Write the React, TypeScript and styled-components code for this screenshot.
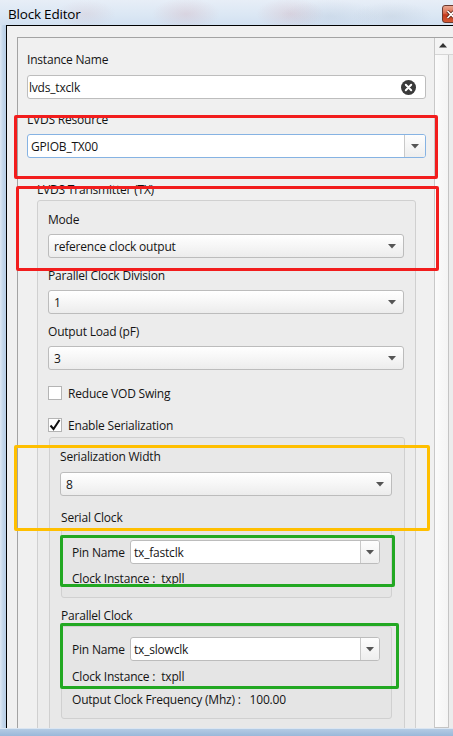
import React from 'react';
import styled, { createGlobalStyle } from 'styled-components';

const Global = createGlobalStyle`
  html, body { margin: 0; padding: 0; background: #c3d5e8; }
  * { box-sizing: border-box; }
`;

const Page = styled.div`
  position: relative;
  width: 453px;
  height: 736px;
  overflow: hidden;
  display: flex;
  flex-direction: column;
  background: linear-gradient(90deg, #dfe9f4 0px, #c3d6ea 3px, #b9cfe6 6px);
  font-family: "Open Sans", "Noto Sans", sans-serif;
  font-size: 12px;
  letter-spacing: -0.2px;
  color: #141414;
`;

const TitleBar = styled.div`
  height: 25px;
  flex: none;
  display: flex;
  align-items: flex-start;
  padding-left: 8px;
  background:
    radial-gradient(ellipse 30px 14px at 86px 14px, rgba(200, 140, 150, 0.14), transparent),
    radial-gradient(ellipse 34px 16px at 186px 14px, rgba(200, 110, 120, 0.16), transparent),
    radial-gradient(ellipse 34px 16px at 290px 14px, rgba(200, 110, 120, 0.16), transparent),
    radial-gradient(ellipse 50px 16px at 330px 16px, rgba(130, 150, 180, 0.14), transparent),
    radial-gradient(ellipse 40px 14px at 392px 16px, rgba(140, 150, 170, 0.14), transparent),
    linear-gradient(180deg, #e7eef7 0%, #dbe7f4 60%, #d2e1f1 100%);
`;

const TitleText = styled.div`
  flex: 1;
  margin-top: 5px;
  font-family: "Open Sans", "Noto Sans", sans-serif;
  font-size: 13.5px;
  line-height: 18px;
  color: #000;
  letter-spacing: -0.2px;
`;

const CloseButton = styled.div`
  flex: none;
  width: 20px;
  height: 18px;
  margin-top: 5px;
  margin-right: -9px;
  border: 1px solid #6b3a30;
  border-radius: 3px 0 0 3px;
  background: linear-gradient(180deg, #e9a790 0%, #d9694c 45%, #c4381c 55%, #d45a34 100%);
  display: flex;
  align-items: center;
  padding-left: 3px;
`;

const Window = styled.div`
  flex: 1;
  min-height: 0;
  margin-left: 6px;
  border-left: 1px solid #000;
  border-top: 1px solid #000;
  background: #f0f0f0;
  padding: 11px 0 0 10px;
  display: flex;
`;

const BottomStrip = styled.div`
  height: 8px;
  flex: none;
  border-top: 1px solid #dbe6f2;
  background: linear-gradient(180deg, #b4cbe4 0%, #9ab8d9 100%);
`;

const ScrollArea = styled.div`
  flex: 1;
  min-width: 0;
  display: flex;
  border-left: 1px solid #a3a3a3;
  border-top: 1px solid #a3a3a3;
`;

const Viewport = styled.div`
  flex: 1;
  min-width: 0;
  overflow: hidden;
  padding: 14px 8px 0 9px;
  display: flex;
  flex-direction: column;
`;

const Scrollbar = styled.div`
  width: 19px;
  flex: none;
  border-left: 1px solid #c8c8c8;
  background: #ececec;
  display: flex;
  flex-direction: column;
`;

const ScrollButton = styled.div`
  height: 17px;
  flex: none;
  display: flex;
  justify-content: center;
  padding-right: 3px;
  padding-top: 5px;
  background: #f4f4f4;
  border-bottom: 1px solid #d6d6d6;
`;

const ScrollThumb = styled.div`
  flex: 1;
  margin-right: 4px;
  background: linear-gradient(90deg, #fbfbfb, #f4f4f4);
  border-right: 1px solid #c4c4c4;
  border-bottom: 1px solid #c4c4c4;
`;

const Label = styled.div<{ $mt?: number }>`
  height: 16px;
  line-height: 16px;
  margin-top: ${p => p.$mt ?? 0}px;
  white-space: nowrap;
  flex: none;
`;

const TextField = styled.div<{ $mt?: number }>`
  height: 24px;
  flex: none;
  margin-top: ${p => p.$mt ?? 0}px;
  border: 1px solid #bdbdbd;
  border-radius: 3px;
  background: #fff;
  display: flex;
  align-items: center;
  padding: 0 9px 0 1px;
`;

const FieldText = styled.span`
  flex: 1;
  white-space: nowrap;
`;

const Combo = styled.div<{ $mt?: number; $focus?: boolean; $edit?: boolean }>`
  height: 24px;
  flex: ${p => (p.$edit ? 1 : 'none')};
  margin-top: ${p => p.$mt ?? 0}px;
  border: 1px solid ${p => (p.$focus ? '#86b3e3' : '#bcbcbc')};
  border-radius: 3px;
  background: ${p => (p.$focus || p.$edit ? '#fff' : 'linear-gradient(180deg, #ffffff 0%, #f6f6f6 50%, #ececec 100%)')};
  display: flex;
  align-items: stretch;
  overflow: hidden;
`;

const ComboText = styled.div<{ $pl: number }>`
  flex: 1;
  display: flex;
  align-items: center;
  padding-left: ${p => p.$pl}px;
  white-space: nowrap;
`;

const ComboButton = styled.div<{ $w: number; $sep?: boolean }>`
  width: ${p => p.$w}px;
  flex: none;
  display: flex;
  align-items: center;
  justify-content: center;
  border-left: ${p => (p.$sep ? '1px solid #c9c9c9' : 'none')};
  background: ${p => (p.$sep ? 'linear-gradient(180deg, #fdfdfd 0%, #eeeeee 100%)' : 'transparent')};
`;

const Group = styled.div<{ $mt: number; $ml: number; $mr: number }>`
  flex: none;
  display: flex;
  flex-direction: column;
  margin: ${p => p.$mt}px ${p => p.$mr}px 0 ${p => p.$ml}px;
`;

const GroupTitle = styled.div`
  height: 16px;
  line-height: 16px;
  margin-bottom: 2px;
  white-space: nowrap;
`;

const Frame = styled.div<{ $bg: string; $pad: string }>`
  border: 1px solid #d0d0d0;
  border-radius: 3px;
  background: ${p => p.$bg};
  padding: ${p => p.$pad};
  display: flex;
  flex-direction: column;
`;

const CheckRow = styled.div<{ $mt: number }>`
  height: 16px;
  flex: none;
  margin-top: ${p => p.$mt}px;
  display: flex;
  align-items: center;
  gap: 6px;
  white-space: nowrap;
`;

const CheckBox = styled.div`
  width: 14px;
  height: 14px;
  flex: none;
  border: 1px solid #b4b4b4;
  background: #fff;
  display: flex;
  align-items: center;
  justify-content: center;
`;

const PinRow = styled.div`
  height: 24px;
  flex: none;
  display: flex;
  align-items: center;
`;

const PinLabel = styled.div`
  width: 58px;
  flex: none;
  white-space: nowrap;
`;

const InfoRow = styled.div<{ $mt: number }>`
  height: 16px;
  line-height: 16px;
  flex: none;
  margin-top: ${p => p.$mt}px;
  display: flex;
  gap: 6px;
  white-space: nowrap;
`;

const Mark = styled.div<{ $x: number; $y: number; $w: number; $h: number; $c: string }>`
  position: absolute;
  left: ${p => p.$x}px;
  top: ${p => p.$y}px;
  width: ${p => p.$w}px;
  height: ${p => p.$h}px;
  border: 3px solid ${p => p.$c};
  border-radius: 2px;
  pointer-events: none;
`;

const DownArrow = () => (
  <svg width="8" height="5" viewBox="0 0 8 5">
    <path d="M0 0 H8 L4 4.5 Z" fill="#555" />
  </svg>
);

const UpArrow = () => (
  <svg width="8" height="5" viewBox="0 0 8 5">
    <path d="M0 4.5 H8 L4 0 Z" fill="#333" />
  </svg>
);

const ClearIcon = () => (
  <svg width="15" height="15" viewBox="0 0 15 15">
    <circle cx="7.5" cy="7.5" r="7.5" fill="#3a3a3a" />
    <path d="M4.8 4.8 L10.2 10.2 M10.2 4.8 L4.8 10.2" stroke="#fff" strokeWidth="2" strokeLinecap="round" />
  </svg>
);

const CheckMark = () => (
  <svg width="12" height="12" viewBox="0 0 12 12">
    <path d="M1.5 6.5 L4.5 10 L10.5 1" stroke="#111" strokeWidth="2" fill="none" strokeLinejoin="miter" />
  </svg>
);

const CloseGlyph = () => (
  <svg width="10" height="9" viewBox="0 0 10 9">
    <path d="M1.5 1 L8.5 8 M8.5 1 L1.5 8" stroke="#5a2418" strokeWidth="3.2" />
    <path d="M1.5 1 L8.5 8 M8.5 1 L1.5 8" stroke="#fff" strokeWidth="1.6" />
  </svg>
);

type ComboProps = { text: string; mt?: number; focus?: boolean; edit?: boolean; pl?: number };

const ComboBox = ({ text, mt, focus, edit, pl = 5 }: ComboProps) => (
  <Combo $mt={mt} $focus={focus} $edit={edit}>
    <ComboText $pl={pl}>{text}</ComboText>
    <ComboButton $w={focus ? 21 : edit ? 19 : 22} $sep={focus || edit}>
      <DownArrow />
    </ComboButton>
  </Combo>
);

export default function App() {
  return (
    <>
      <Global />
      <Page>
        <TitleBar>
          <TitleText>Block Editor</TitleText>
          <CloseButton>
            <CloseGlyph />
          </CloseButton>
        </TitleBar>
        <Window>
          <ScrollArea>
            <Viewport>
              <Label>Instance Name</Label>
              <TextField $mt={7}>
                <FieldText>lvds_txclk</FieldText>
                <ClearIcon />
              </TextField>
              <Label $mt={13}>LVDS Resource</Label>
              <ComboBox text="GPIOB_TX00" mt={6} focus pl={3} />

              <Group $mt={24} $ml={10} $mr={10}>
                <GroupTitle>LVDS Transmitter (TX)</GroupTitle>
                <Frame $bg="#ececec" $pad="11px 11px 12px 10px">
                  <Label>Mode</Label>
                  <ComboBox text="reference clock output" mt={6} />
                  <Label $mt={10}>Parallel Clock Division</Label>
                  <ComboBox text="1" mt={6} />
                  <Label $mt={10}>Output Load (pF)</Label>
                  <ComboBox text="3" mt={6} />
                  <CheckRow $mt={15}>
                    <CheckBox />
                    Reduce VOD Swing
                  </CheckRow>
                  <CheckRow $mt={16}>
                    <CheckBox>
                      <CheckMark />
                    </CheckBox>
                    Enable Serialization
                  </CheckRow>

                  <Group $mt={4} $ml={1} $mr={-1}>
                    <Frame $bg="#e8e8e8" $pad="11px 12px 12px 10px">
                      <Label>Serialization Width</Label>
                      <ComboBox text="8" mt={7} />

                      <Group $mt={14} $ml={1} $mr={0}>
                        <GroupTitle>Serial Clock</GroupTitle>
                        <Frame $bg="#e5e5e5" $pad="11px 11px 10px 10px">
                          <PinRow>
                            <PinLabel>Pin Name</PinLabel>
                            <ComboBox text="tx_fastclk" edit pl={3} />
                          </PinRow>
                          <InfoRow $mt={7}>
                            <span>Clock Instance :</span>
                            <span>txpll</span>
                          </InfoRow>
                        </Frame>
                      </Group>

                      <Group $mt={10} $ml={1} $mr={0}>
                        <GroupTitle>Parallel Clock</GroupTitle>
                        <Frame $bg="#e5e5e5" $pad="10px 11px 10px 10px">
                          <PinRow>
                            <PinLabel>Pin Name</PinLabel>
                            <ComboBox text="tx_slowclk" edit pl={3} />
                          </PinRow>
                          <InfoRow $mt={8}>
                            <span>Clock Instance :</span>
                            <span>txpll</span>
                          </InfoRow>
                          <InfoRow $mt={7}>
                            <span>Output Clock Frequency (Mhz) :</span>
                            <span>&nbsp;100.00</span>
                          </InfoRow>
                        </Frame>
                      </Group>
                    </Frame>
                  </Group>
                </Frame>
              </Group>
            </Viewport>
            <Scrollbar>
              <ScrollButton>
                <UpArrow />
              </ScrollButton>
              <ScrollThumb />
            </Scrollbar>
          </ScrollArea>
        </Window>
        <BottomStrip />

        <Mark $x={14} $y={115} $w={424} $h={64} $c="#f21d1d" />
        <Mark $x={16} $y={186} $w={423} $h={85} $c="#f21d1d" />
        <Mark $x={14} $y={445} $w={416} $h={86} $c="#ffbf00" />
        <Mark $x={60} $y={535} $w={335} $h={52} $c="#22a822" />
        <Mark $x={60} $y={623} $w={339} $h={66} $c="#22a822" />
      </Page>
    </>
  );
}
